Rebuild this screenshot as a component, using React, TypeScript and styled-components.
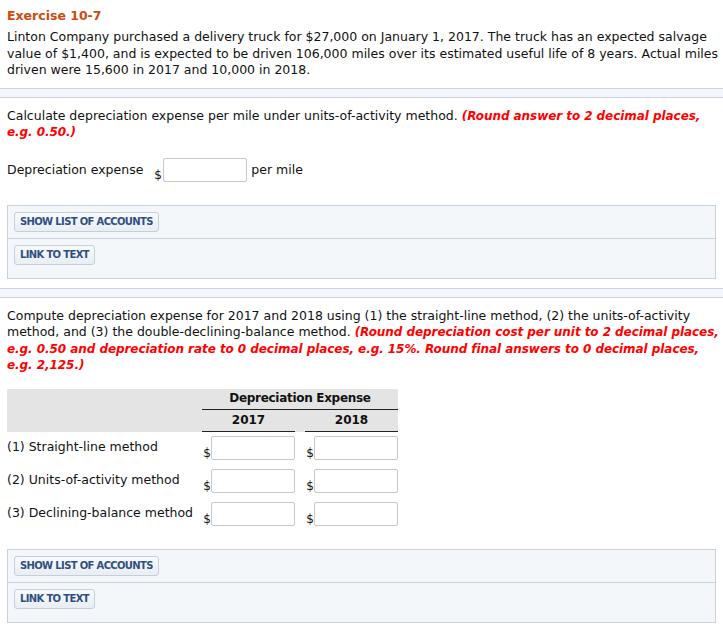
import React from "react";
import styled, { createGlobalStyle } from "styled-components";

const GlobalStyle = createGlobalStyle`
  html, body {
    margin: 0;
    padding: 0;
    background: #fff;
  }
  body {
    font-family: "DejaVu Sans", Verdana, sans-serif;
    font-size: 12.5px;
    color: #111;
  }
`;

export default function App() {
  return (
    <Page>
      <GlobalStyle />
      <Section>
        <Title>Exercise 10-7</Title>
        <Text>
          Linton Company purchased a delivery truck for $27,000 on January 1, 2017. The truck has an expected salvage
          <br />
          value of $1,400, and is expected to be driven 106,000 miles over its estimated useful life of 8 years. Actual miles
          <br />
          driven were 15,600 in 2017 and 10,000 in 2018.
        </Text>
      </Section>
      <Band />
      <Section>
        <Text>
          Calculate depreciation expense per mile under units-of-activity method.{" "}
          <Hint>
            (Round answer to 2 decimal places,
            <br />
            e.g. 0.50.)
          </Hint>
        </Text>
        <AnswerRow>
          <Label>Depreciation expense</Label>
          <Dollar>$</Dollar>
          <Input />
          <Unit>per mile</Unit>
        </AnswerRow>
        <ToolBox>
          <ToolRow>
            <Button>Show List of Accounts</Button>
          </ToolRow>
          <ToolRow $last>
            <Button>Link to Text</Button>
          </ToolRow>
        </ToolBox>
      </Section>
      <Band />
      <Section>
        <Text>
          Compute depreciation expense for 2017 and 2018 using (1) the straight-line method, (2) the units-of-activity
          <br />
          method, and (3) the double-declining-balance method.{" "}
          <Hint>
            (Round depreciation cost per unit to 2 decimal places,
            <br />
            e.g. 0.50 and depreciation rate to 0 decimal places, e.g. 15%. Round final answers to 0 decimal places,
            <br />
            e.g. 2,125.)
          </Hint>
        </Text>
        <Table>
          <Head>
            <GroupHead>Depreciation Expense</GroupHead>
            <YearHead $col={2}>2017</YearHead>
            <YearHead $col={4}>2018</YearHead>
          </Head>
          <Body>
            {["(1) Straight-line method", "(2) Units-of-activity method", "(3) Declining-balance method"].map(
              (label) => (
                <Row key={label}>
                  <RowLabel>{label}</RowLabel>
                  <Cell $col={2}>
                    <Dollar>$</Dollar>
                    <Input />
                  </Cell>
                  <Cell $col={4}>
                    <Dollar>$</Dollar>
                    <Input />
                  </Cell>
                </Row>
              )
            )}
          </Body>
        </Table>
        <ToolBox>
          <ToolRow>
            <Button>Show List of Accounts</Button>
          </ToolRow>
          <ToolRow $last>
            <Button>Link to Text</Button>
          </ToolRow>
        </ToolBox>
      </Section>
    </Page>
  );
}

const Page = styled.div`
  width: 723px;
  padding-top: 8px;
`;

const Section = styled.section`
  padding: 0 7px 9px 7px;
`;

const Title = styled.h2`
  margin: 0 0 5px 0;
  font-size: 12.5px;
  line-height: 16px;
  font-weight: bold;
  color: #d0490b;
`;

const Text = styled.p`
  margin: 0;
  font-size: 12.5px;
  line-height: 16.5px;
  white-space: nowrap;
`;

const Hint = styled.span`
  color: #ff0000;
  font-size: 12px;
  letter-spacing: -0.06px;
  font-weight: bold;
  font-style: italic;
`;

const Band = styled.div`
  height: 8px;
  background: #f3f6fa;
  border-top: 1px solid #ccd3dd;
  border-bottom: 1px solid #ccd3dd;
  margin-bottom: 10px;
`;

const AnswerRow = styled.div`
  display: flex;
  align-items: center;
  margin-top: 17px;
  height: 24px;
`;

const Label = styled.span`
  margin-right: 11px;
  line-height: 16px;
`;

const Dollar = styled.span`
  align-self: flex-end;
  font-size: 12px;
  line-height: 14px;
  width: 9px;
  text-align: left;
`;

const Input = styled.input`
  box-sizing: border-box;
  width: 84px;
  height: 24px;
  border: 1px solid #c8c8c8;
  border-radius: 2px;
  background: #fff;
  padding: 2px 4px;
  margin: 0;
  font: inherit;
`;

const Unit = styled.span`
  margin-left: 4px;
`;

const ToolBox = styled.div`
  margin-top: 23px;
  border: 1px solid #c9d1dc;
  background: #f4f7fa;
`;

const ToolRow = styled.div<{ $last?: boolean }>`
  padding: ${(p) => (p.$last ? "6px 6px 13px" : "6px")};
  border-bottom: ${(p) => (p.$last ? "none" : "1px solid #c9d1dc")};
`;

const Button = styled.button`
  box-sizing: border-box;
  height: 20px;
  padding: 0 5px;
  font-family: "DejaVu Sans", Verdana, sans-serif;
  font-size: 10px;
  letter-spacing: -0.65px;
  font-weight: bold;
  text-transform: uppercase;
  color: #2f4f80;
  background: linear-gradient(#f8fafc, #e9eef4);
  border: 1px solid #c5ced9;
  border-radius: 3px;
  cursor: pointer;
`;

const Table = styled.div`
  width: 391px;
  margin-top: 15px;
`;

const grid = `
  display: grid;
  grid-template-columns: 195px 93px 10px 93px;
`;

const Head = styled.div`
  ${grid}
  grid-template-rows: 21px 22px;
  background: #e4e4e4;
`;

const GroupHead = styled.div`
  grid-column: 2 / 5;
  grid-row: 1;
  border-bottom: 1px solid #222;
  text-align: center;
  font-size: 12px;
  letter-spacing: -0.3px;
  font-weight: bold;
  line-height: 19px;
`;

const YearHead = styled.div<{ $col: number }>`
  grid-column: ${(p) => p.$col};
  grid-row: 2;
  border-bottom: 1px solid #222;
  text-align: center;
  font-size: 12px;
  font-weight: bold;
  line-height: 20px;
`;

const Body = styled.div`
  padding-top: 4px;
  display: flex;
  flex-direction: column;
  gap: 9px;
`;

const Row = styled.div`
  ${grid}
  height: 24px;
  align-items: center;
`;

const RowLabel = styled.div`
  grid-column: 1;
  line-height: 16px;
  margin-top: -2px;
`;

const Cell = styled.div<{ $col: number }>`
  grid-column: ${(p) => p.$col};
  display: flex;
  height: 24px;
  padding-left: 2px;
  box-sizing: border-box;
  justify-content: flex-end;
`;
